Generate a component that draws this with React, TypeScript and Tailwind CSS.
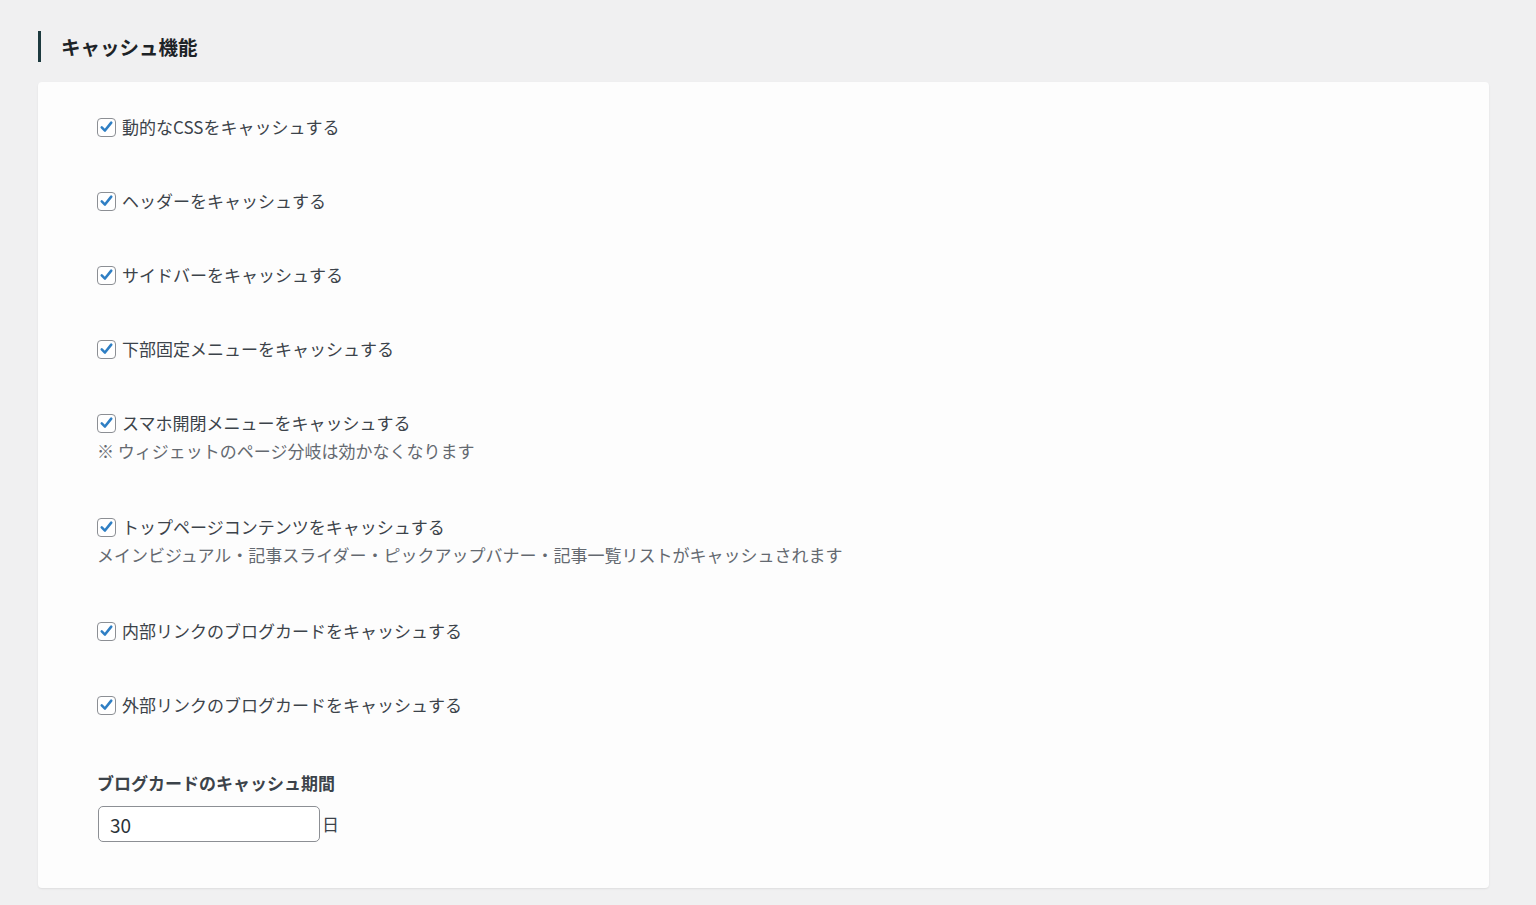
import React, { useState } from 'react';

const ITEMS: { id: string; label: string; note?: string }[] = [
  { id: 'css', label: '動的なCSSをキャッシュする' },
  { id: 'header', label: 'ヘッダーをキャッシュする' },
  { id: 'sidebar', label: 'サイドバーをキャッシュする' },
  { id: 'fixmenu', label: '下部固定メニューをキャッシュする' },
  { id: 'spmenu', label: 'スマホ開閉メニューをキャッシュする', note: '※ ウィジェットのページ分岐は効かなくなります' },
  {
    id: 'top',
    label: 'トップページコンテンツをキャッシュする',
    note: 'メインビジュアル・記事スライダー・ピックアップバナー・記事一覧リストがキャッシュされます',
  },
  { id: 'inner', label: '内部リンクのブログカードをキャッシュする' },
  { id: 'outer', label: '外部リンクのブログカードをキャッシュする' },
];

function CheckBox({ checked, onChange }: { checked: boolean; onChange: () => void }) {
  return (
    <button
      type="button"
      role="checkbox"
      aria-checked={checked}
      onClick={onChange}
      className="flex h-[19px] w-[19px] shrink-0 items-center justify-center rounded-[4px] border border-[#8c8f94] bg-white"
    >
      {checked && (
        <svg viewBox="0 0 20 20" className="h-[18px] w-[18px]">
          <path d="M4.4 10.4 L8.2 14.2 L15.6 4.9" fill="none" stroke="#2f7fc4" strokeWidth="3" strokeLinecap="round" strokeLinejoin="round" />
        </svg>
      )}
    </button>
  );
}

export default function App() {
  const [checked, setChecked] = useState<Set<string>>(new Set(ITEMS.map((i) => i.id)));
  const [days, setDays] = useState('30');

  const toggle = (id: string) => {
    setChecked((prev) => {
      const next = new Set(prev);
      if (next.has(id)) next.delete(id);
      else next.add(id);
      return next;
    });
  };

  return (
    <div
      className="min-h-[905px] bg-[#f0f0f1] pt-[31px] pl-[38px] pr-[47px] pb-4 text-[#3c434a]"
      style={{ fontFamily: '"Noto Sans CJK JP", "Noto Sans", sans-serif' }}
    >
      <h2 className="flex h-[31px] items-center border-l-[3px] border-[#1d3a3f] pl-[20px] text-[19.5px] font-bold text-[#1d2327]">
        キャッシュ機能
      </h2>

      <div className="mt-[20px] rounded-[4px] bg-[#fdfdfd] pt-[33px] pb-[46px] pl-[59px] shadow-[0_1px_2px_rgba(0,0,0,0.08)]">
        <div className="flex flex-col gap-[50px]">
          {ITEMS.map((item) => (
            <div key={item.id} className={item.note ? 'pb-[2px]' : ''}>
              <label className="flex h-6 cursor-pointer items-center gap-[6px] text-[17px] leading-6">
                <CheckBox checked={checked.has(item.id)} onChange={() => toggle(item.id)} />
                <span>{item.label}</span>
              </label>
              {item.note && <p className="mt-1 text-[17px] leading-6 text-[#646970]">{item.note}</p>}
            </div>
          ))}
        </div>

        <div className="mt-[54px]">
          <h3 className="text-[17px] font-bold leading-6 text-[#3c434a]">ブログカードのキャッシュ期間</h3>
          <div className="mt-[11px] flex items-center gap-[2px]">
            <input
              type="text"
              value={days}
              onChange={(e) => setDays(e.target.value)}
              className="ml-px h-[36px] w-[222px] rounded-[5px] border border-[#8c8f94] bg-white px-[11px] text-[19px] text-[#2c3338] outline-none"
            />
            <span className="text-[17px]">日</span>
          </div>
        </div>
      </div>
    </div>
  );
}
